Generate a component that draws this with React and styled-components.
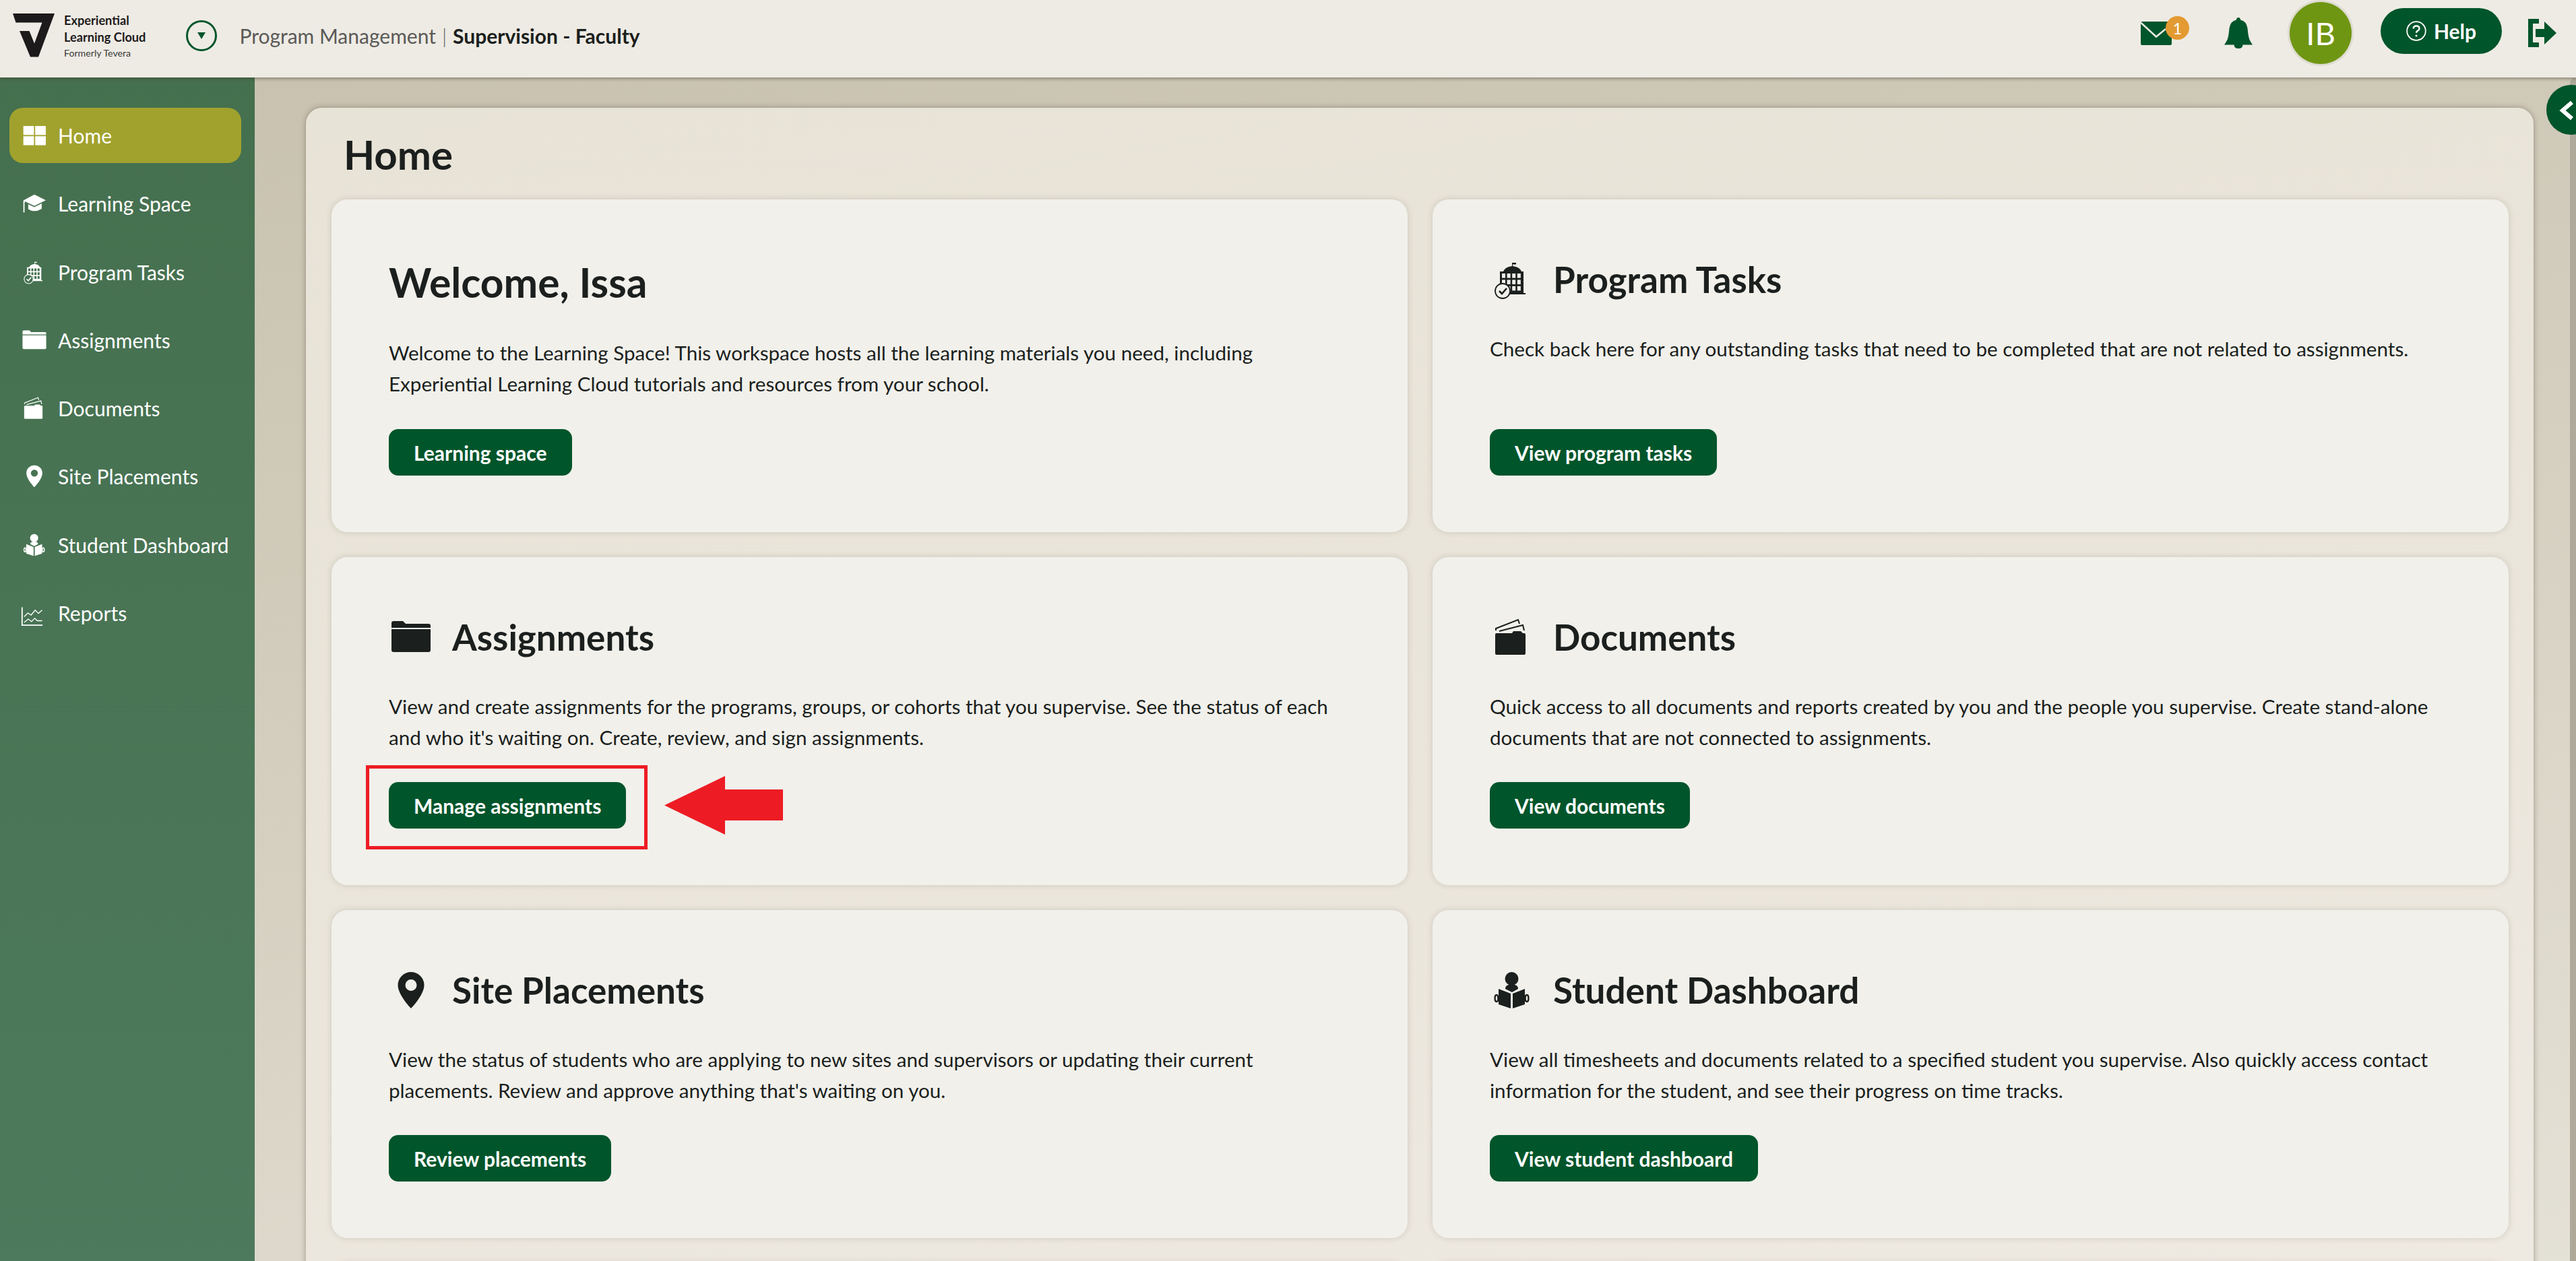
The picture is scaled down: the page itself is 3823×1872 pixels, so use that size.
import styled, { createGlobalStyle } from "styled-components";

const GREEN = "#00552b";
const INK = "#1b1f1d";

const GlobalStyle = createGlobalStyle`
  html, body {
    margin: 0;
    padding: 0;
    height: 100%;
    overflow: hidden;
    font-family: Lato, "Open Sans", sans-serif;
    color: ${INK};
  }
  * { box-sizing: border-box; }
`;

// drawn on a 66x66 box so the same art works in the sidebar and on the cards
const HomeIcon = () => (
  <svg viewBox="0 0 66 66" fill="currentColor">
    <rect x="6" y="10" width="26" height="22" />
    <rect x="35" y="10" width="26" height="22" />
    <rect x="6" y="35" width="26" height="22" />
    <rect x="35" y="35" width="26" height="22" />
  </svg>
);

const CapIcon = () => (
  <svg viewBox="0 0 66 66" fill="currentColor">
    <path d="M33 11l28 14-28 14L10 28v3L7 29v-4z" />
    <path d="M18 35l15 7 18-9v13q-18 11-33 1z" />
    <rect x="6" y="26" width="3" height="29" />
  </svg>
);

const windows = [0, 1, 2].flatMap((row) =>
  [0, 1, 2, 3].map((col) => ({ x: 18 + col * 7.6, y: 24 + row * 9.4 }))
);

const BuildingIcon = () => (
  <svg viewBox="0 0 66 66" fill="currentColor">
    <path d="M33 8h6v2.500h-5V13q10 1 13 8h3v32h3v2H15V21h5q3-7 13-8z" />
    {windows.map((w) => (
      <rect key={`${w.x}-${w.y}`} x={w.x} y={w.y} width="5" height="6.6" fill="var(--icon-bg)" />
    ))}
    <circle cx="19" cy="50" r="11" fill="var(--icon-bg)" stroke="currentColor" strokeWidth="1.8" />
    <path d="M14 50l4 4 7-8" fill="none" stroke="currentColor" strokeWidth="2.6" />
  </svg>
);

const FolderIcon = () => (
  <svg viewBox="0 0 66 66" fill="currentColor">
    <path d="M4 12a3 3 0 0 1 3-3h14l4 4h34a3 3 0 0 1 3 3v3H4z" />
    <path d="M4 21h58v31a3 3 0 0 1-3 3H7a3 3 0 0 1-3-3z" />
  </svg>
);

const DocsIcon = () => (
  <svg viewBox="0 0 66 66" fill="currentColor">
    <path d="M8 29q0-2 2-2h23l2-3h11l3 3h2q2 0 2 2v28q0 2-2 2H10q-2 0-2-2z" />
    <path d="M9 23v-3L42 7l2 6M14 24l35-9 2 8" fill="none" stroke="currentColor" strokeWidth="2" />
  </svg>
);

const PinIcon = () => (
  <svg viewBox="0 0 66 66" fill="currentColor">
    <path
      fillRule="evenodd"
      d="M33 6a19.500 19.500 0 0 1 19.500 19.500C52.500 40 33 60 33 60S13.500 40 13.500 25.500A19.500 19.500 0 0 1 33 6zm0 11a8.500 8.500 0 1 0 0 17 8.500 8.500 0 0 0 0-17z"
    />
  </svg>
);

const ReaderIcon = () => (
  <svg viewBox="0 0 66 66" fill="currentColor">
    <circle cx="32.5" cy="16" r="10" />
    <path d="M23 31q0-5 5-6h9q5 1 5 6l-9 5z" />
    <path d="M13 31l18 7v22l-18-6zM52 31l-18 7v22l18-6z" />
    <ellipse cx="10" cy="45" rx="2.4" ry="5" fill="none" stroke="currentColor" strokeWidth="2.4" />
    <ellipse cx="55" cy="45" rx="2.4" ry="5" fill="none" stroke="currentColor" strokeWidth="2.4" />
  </svg>
);

const ChartIcon = () => (
  <svg viewBox="0 0 66 66" fill="none" stroke="currentColor">
    <path d="M3 19v44h50" strokeWidth="3" />
    <path d="M8 42l9-9 8 5 10-12 8 8 9-8" strokeWidth="2.2" />
    <path d="M8 56l10-8 8 6 8-8 6 6h12" strokeWidth="2.2" />
  </svg>
);

const LogoMark = () => (
  <svg viewBox="0 0 62 65" width="62" height="65" fill="#1d1a1b">
    <path d="M0 0h62L38 64.500H26L10 26h14.500L32 44.500 43.500 13.500H4.500z" />
  </svg>
);

const navItems = [
  { label: "Home", icon: HomeIcon, active: true },
  { label: "Learning Space", icon: CapIcon },
  { label: "Program Tasks", icon: BuildingIcon },
  { label: "Assignments", icon: FolderIcon },
  { label: "Documents", icon: DocsIcon },
  { label: "Site Placements", icon: PinIcon },
  { label: "Student Dashboard", icon: ReaderIcon },
  { label: "Reports", icon: ChartIcon },
];

const cards = [
  {
    title: "Welcome, Issa",
    big: true,
    text: "Welcome to the Learning Space! This workspace hosts all the learning materials you need, including Experiential Learning Cloud tutorials and resources from your school.",
    action: "Learning space",
  },
  {
    title: "Program Tasks",
    icon: BuildingIcon,
    text: "Check back here for any outstanding tasks that need to be completed that are not related to assignments.",
    action: "View program tasks",
  },
  {
    title: "Assignments",
    icon: FolderIcon,
    text: "View and create assignments for the programs, groups, or cohorts that you supervise. See the status of each and who it's waiting on. Create, review, and sign assignments.",
    action: "Manage assignments",
    marked: true,
  },
  {
    title: "Documents",
    icon: DocsIcon,
    text: "Quick access to all documents and reports created by you and the people you supervise. Create stand-alone documents that are not connected to assignments.",
    action: "View documents",
  },
  {
    title: "Site Placements",
    icon: PinIcon,
    text: "View the status of students who are applying to new sites and supervisors or updating their current placements. Review and approve anything that's waiting on you.",
    action: "Review placements",
  },
  {
    title: "Student Dashboard",
    icon: ReaderIcon,
    text: "View all timesheets and documents related to a specified student you supervise. Also quickly access contact information for the student, and see their progress on time tracks.",
    action: "View student dashboard",
  },
];

export default function App() {
  return (
    <Page>
      <GlobalStyle />
      <Header>
        <Brand>
          <LogoMark />
          <BrandText>
            <BrandLine>Experiential</BrandLine>
            <BrandLine>Learning Cloud</BrandLine>
            <BrandNote>Formerly Tevera</BrandNote>
          </BrandText>
        </Brand>
        <RoleToggle aria-label="Switch role">
          <svg viewBox="0 0 46 46" width="46" height="46">
            <circle cx="23" cy="23" r="21.500" fill="none" stroke={GREEN} strokeWidth="3" />
            <path d="M17 18h12l-6 10z" fill={GREEN} />
          </svg>
        </RoleToggle>
        <Crumb>
          Program Management<CrumbBar>|</CrumbBar><strong>Supervision - Faculty</strong>
        </Crumb>
        <HeaderTools>
          <MailButton>
            <svg viewBox="0 0 46 35" width="46" height="35">
              <rect width="46" height="35" rx="2" fill={GREEN} />
              <path d="M0 1.500L23 22.500 37 11" fill="none" stroke="#eeebe4" strokeWidth="2.500" />
            </svg>
            <Badge>1</Badge>
          </MailButton>
          <svg viewBox="0 0 42 46" width="42" height="46" fill={GREEN}>
            <path d="M21 0q3 0 3 3.500 9 2 10.500 12.500 1 12 3 17 2 4 4.500 7.500H0q2.500-3.500 4.500-7.500 2-5 3-17Q9 5.500 18 3.500 18 0 21 0z" />
            <path d="M14.500 40h13q0 6-6.500 6t-6.500-6z" />
          </svg>
          <Avatar>IB</Avatar>
          <HelpButton>
            <svg viewBox="0 0 30 30" width="30" height="30" fill="none" stroke="#fff" strokeWidth="1.800">
              <circle cx="15" cy="15" r="13.800" />
              <path d="M10.500 11.500q.5-4 4.500-4 4.500 0 4.500 3.700 0 2-2.300 3.300-2.200 1.200-2.200 3.300" strokeWidth="2.400" />
              <circle cx="15" cy="22" r="1.500" fill="#fff" stroke="none" />
            </svg>
            Help
          </HelpButton>
          <svg viewBox="0 0 43 42" width="43" height="42" fill={GREEN}>
            <path d="M0 0h16v7H7v28h9v7H0z" />
            <path d="M11 15h13V4l18 17-18 17V27H11z" />
          </svg>
        </HeaderTools>
      </Header>

      <Body>
        <Sidebar>
          {navItems.map(({ label, icon: Icon, active }) => (
            <NavItem key={label} $active={active}>
              <NavIcon>
                <Icon />
              </NavIcon>
              {label}
            </NavItem>
          ))}
        </Sidebar>

        <Main>
          <Panel>
            <PanelTitle>Home</PanelTitle>
            <CardGrid>
              {cards.map(({ title, big, icon: Icon, text, action, marked }) => (
                <Card key={title}>
                  <CardHead $big={big}>
                    {Icon && (
                      <CardIcon>
                        <Icon />
                      </CardIcon>
                    )}
                    {title}
                  </CardHead>
                  <CardText>{text}</CardText>
                  <ActionRow>
                    <ActionButton>{action}</ActionButton>
                    {marked && (
                      <>
                        <RedBox />
                        <RedArrow viewBox="0 0 176 87" width="176" height="87">
                          <path d="M0 43.500L90 0v20h86v46H90v21z" fill="#ed1c24" />
                        </RedArrow>
                      </>
                    )}
                  </ActionRow>
                </Card>
              ))}
              <Card />
              <Card />
            </CardGrid>
          </Panel>
          <Scrollbar />
          <CollapseTab>
            <svg viewBox="0 0 24 30" width="24" height="30">
              <path d="M20 3L6 15l14 12" fill="none" stroke="#fff" strokeWidth="6" />
            </svg>
          </CollapseTab>
        </Main>
      </Body>
    </Page>
  );
}

const Page = styled.div`
  height: 100vh;
  display: flex;
  flex-direction: column;
  overflow: hidden;
`;

const Header = styled.header`
  height: 115px;
  flex: none;
  display: flex;
  align-items: center;
  padding: 0 28px 10px 19px;
  background: #eeebe4;
  box-shadow: 0 2px 5px rgba(60, 55, 40, 0.45);
  position: relative;
  z-index: 2;
`;

const Brand = styled.div`
  display: flex;
  align-items: center;
  gap: 14px;
`;

const BrandText = styled.div`
  display: flex;
  flex-direction: column;
  margin-top: 5px;
`;

const BrandLine = styled.span`
  font-size: 18.2px;
  line-height: 24.500px;
  font-weight: 700;
  color: #1d1a1b;
`;

const BrandNote = styled.span`
  font-size: 14.2px;
  line-height: 24.500px;
  color: #3a3a3a;
`;

const RoleToggle = styled.div`
  width: 46px;
  height: 46px;
  margin-left: 60px;
  display: flex;
`;

const Crumb = styled.div`
  margin-left: 33px;
  font-size: 30px;
  font-weight: 400;
  color: #5a5a58;
  white-space: nowrap;
  strong {
    font-weight: 700;
    color: ${INK};
  }
`;

const CrumbBar = styled.span`
  margin: 0 9px;
  font-weight: 300;
`;

const HeaderTools = styled.div`
  margin-left: auto;
  display: flex;
  align-items: center;
  padding-bottom: 7px;
  > svg:nth-child(2) {
    margin-left: 78px;
  }
`;

const MailButton = styled.div`
  position: relative;
  display: flex;
`;

const Badge = styled.span`
  position: absolute;
  left: 37px;
  top: -8px;
  width: 35px;
  height: 35px;
  border-radius: 50%;
  background: #e39a31;
  color: #fff;
  font-size: 24px;
  line-height: 35px;
  text-align: center;
`;

const Avatar = styled.div`
  width: 92px;
  height: 92px;
  margin: 0 43px 0 55px;
  border-radius: 50%;
  background: #6f9612;
  box-shadow: 0 0 0 3px #dedbd0;
  color: #fff;
  font-size: 47px;
  font-weight: 400;
  display: flex;
  align-items: center;
  justify-content: center;
`;

const HelpButton = styled.div`
  width: 180px;
  height: 68px;
  margin-right: 39px;
  margin-bottom: 6px;
  border-radius: 34px;
  background: ${GREEN};
  color: #fff;
  font-size: 30px;
  font-weight: 700;
  display: flex;
  align-items: center;
  justify-content: center;
  gap: 11px;
`;

const Body = styled.div`
  flex: 1;
  min-height: 0;
  display: flex;
`;

const Sidebar = styled.nav`
  width: 378px;
  flex: none;
  padding: 45px 20px 0 14px;
  display: flex;
  flex-direction: column;
  gap: 19.300px;
  background: linear-gradient(180deg, #45704f 0%, #4d7a5c 100%);
`;

const NavItem = styled.a`
  height: 82px;
  padding-left: 17px;
  display: flex;
  align-items: center;
  gap: 15px;
  border-radius: 20px;
  font-size: 30px;
  color: #fff;
  background: ${({ $active }) => ($active ? "#a1a22e" : "transparent")};
  --icon-bg: ${({ $active }) => ($active ? "#a1a22e" : "#45704f")};
`;

const NavIcon = styled.span`
  width: 40px;
  height: 40px;
  flex: none;
  display: flex;
  svg {
    width: 100%;
    height: 100%;
  }
`;

const Main = styled.main`
  flex: 1;
  min-width: 0;
  position: relative;
  padding: 45px 63px 0 76px;
  overflow: hidden;
  background: linear-gradient(170deg, #c9c2b0 0%, #d6d0c1 50%, #e4e1d6 100%);
`;

const Panel = styled.section`
  border-radius: 24px 24px 0 0;
  padding: 0 37px 0 38px;
  background: linear-gradient(170deg, #e8e3d7 0%, #eae5da 40%, #f0ebe4 100%);
  box-shadow: 0 0 8px rgba(70, 65, 50, 0.45);
`;

const PanelTitle = styled.h1`
  margin: 0;
  height: 136px;
  padding: 33px 0 0 18px;
  font-size: 60px;
  line-height: 72px;
  font-weight: 700;
`;

const CardGrid = styled.div`
  display: grid;
  grid-template-columns: 1fr 1fr;
  grid-auto-rows: 487px;
  grid-template-rows: 494px;
  gap: 37px;
`;

const Card = styled.article`
  --icon-bg: #f1f0eb;
  padding: 84px 85px;
  display: flex;
  flex-direction: column;
  border-radius: 24px;
  background: #f1f0eb;
  box-shadow: 0 0 10px rgba(70, 65, 50, 0.18);
`;

const CardHead = styled.h2`
  margin: 0 0 ${({ $big }) => ($big ? 43 : 45)}px;
  display: flex;
  align-items: center;
  gap: 28px;
  font-size: ${({ $big }) => ($big ? 60.5 : 53)}px;
  line-height: ${({ $big }) => ($big ? 78 : 70)}px;
  font-weight: 700;
  white-space: nowrap;
`;

const CardIcon = styled.span`
  width: 66px;
  height: 66px;
  display: flex;
  svg {
    width: 100%;
    height: 100%;
  }
`;

const CardText = styled.p`
  margin: 0;
  font-size: 29.600px;
  line-height: 46px;
`;

const ActionRow = styled.div`
  margin-top: auto;
  position: relative;
  display: flex;
`;

const ActionButton = styled.button`
  height: 69px;
  padding: 0 37px;
  border: 0;
  border-radius: 14px;
  background: ${GREEN};
  color: #fff;
  font-family: inherit;
  font-size: 30px;
  font-weight: 700;
`;

const RedBox = styled.div`
  position: absolute;
  left: -34px;
  top: -25px;
  width: 418px;
  height: 125px;
  border: 5px solid #ed1c24;
`;

const RedArrow = styled.svg`
  position: absolute;
  left: 409px;
  top: -9px;
`;

const Scrollbar = styled.div`
  position: absolute;
  top: 0;
  right: 0;
  bottom: 0;
  width: 9px;
  border-radius: 9px 0 0 0;
  background: #afa99c;
`;

const CollapseTab = styled.div`
  position: absolute;
  top: 11px;
  left: 3401px;
  width: 74px;
  height: 74px;
  border-radius: 50%;
  padding: 23px 0 0 18px;
  background: ${GREEN};
  display: flex;
`;
